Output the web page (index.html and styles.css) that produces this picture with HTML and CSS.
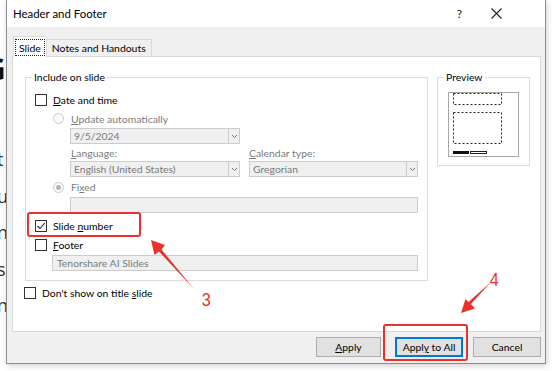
FILE: index.html
```html
<!DOCTYPE html>
<html lang="en">
  <head>
    <meta charset="UTF-8" />
    <meta name="viewport" content="width=device-width, initial-scale=1.0" />
    <title>Header and Footer</title>
    <link rel="stylesheet" href="styles.css">
  </head>
  <body>
    <!-- slide text peeking out behind the dialog -->
    <div class="slide-bg">
      <span class="bg-big">G</span>
      <span class="bg-letter l1">t</span>
      <span class="bg-letter l2">u</span>
      <span class="bg-letter l3">n</span>
      <span class="bg-letter l4">s</span>
      <span class="bg-letter l5">n</span>
    </div>

    <div class="dialog">
      <div class="titlebar">
        <span class="title">Header and Footer</span>
        <span class="help">?</span>
        <svg class="close" width="11" height="11" viewBox="0 0 11 11">
          <path d="M0.5 0.5 L10.5 10.5 M10.5 0.5 L0.5 10.5" stroke="#222" stroke-width="1.1" fill="none" />
        </svg>
      </div>

      <div class="dialog-body">
        <div class="tabs">
          <div class="tab active"><span class="focus">Slide</span></div>
          <div class="tab">Notes and Handouts</div>
        </div>

        <div class="panel">
          <div class="groups">
            <fieldset class="group include">
              <legend>Include on slide</legend>

              <div class="row row-date">
                <span class="check"></span>
                <span class="label"><u>D</u>ate and time</span>
              </div>
              <div class="row row-radio">
                <span class="radio"></span>
                <span class="label off"><u>U</u>pdate automatically</span>
              </div>
              <div class="combo combo-date">
                <span class="value">9/5/2024</span>
                <span class="drop"><svg width="5" height="3" viewBox="0 0 5 3"><path d="M0 0 L2.5 2.5 L5 0" stroke="#777" fill="none" /></svg></span>
              </div>
              <div class="pair-labels">
                <span class="label off lang-label"><u>L</u>anguage:</span>
                <span class="label off cal-label"><u>C</u>alendar type:</span>
              </div>
              <div class="pair-combos">
                <div class="combo combo-lang">
                  <span class="value">English (United States)</span>
                  <span class="drop"><svg width="5" height="3" viewBox="0 0 5 3"><path d="M0 0 L2.5 2.5 L5 0" stroke="#777" fill="none" /></svg></span>
                </div>
                <div class="combo combo-cal">
                  <span class="value">Gregorian</span>
                  <span class="drop"><svg width="5" height="3" viewBox="0 0 5 3"><path d="M0 0 L2.5 2.5 L5 0" stroke="#777" fill="none" /></svg></span>
                </div>
              </div>
              <div class="row row-fixed">
                <span class="radio picked"></span>
                <span class="label off">Fi<u>x</u>ed</span>
              </div>
              <div class="field field-fixed"></div>

              <div class="row row-number">
                <span class="check">
                  <svg width="10" height="10" viewBox="0 0 10 10"><path d="M1.5 5 L4 7.5 L8.8 2" stroke="#222" stroke-width="1.1" fill="none" /></svg>
                </span>
                <span class="label">Slide <u>n</u>umber</span>
              </div>
              <div class="row row-footer">
                <span class="check"></span>
                <span class="label"><u>F</u>ooter</span>
              </div>
              <div class="field field-footer">Tenorshare AI Slides</div>
            </fieldset>

            <fieldset class="group preview">
              <legend>Preview</legend>
              <svg class="preview-art" width="71" height="65" viewBox="0 0 71 65">
                <rect x="0.5" y="0.5" width="70" height="64" fill="#fff" stroke="#a6a6a6" />
                <rect x="5.5" y="1.5" width="48" height="11" fill="none" stroke="#222" stroke-dasharray="2 2" />
                <rect x="5.5" y="20.5" width="48" height="31" fill="none" stroke="#222" stroke-dasharray="2 2" />
                <rect x="5" y="59" width="16" height="3" fill="#111" />
                <rect x="22.5" y="59.5" width="16" height="2" fill="#fff" stroke="#222" />
              </svg>
            </fieldset>
          </div>

          <div class="row row-title">
            <span class="check"></span>
            <span class="label">Don't show on title <u>s</u>lide</span>
          </div>
        </div>

        <div class="buttons">
          <button class="btn btn-apply"><u>A</u>pply</button>
          <button class="btn btn-all">Appl<u>y</u> to All</button>
          <button class="btn btn-cancel">Cancel</button>
        </div>
      </div>
    </div>

    <!-- red annotations drawn over the screenshot -->
    <div class="mark mark-number"></div>
    <div class="mark mark-all"></div>
    <svg class="arrows" width="554" height="371" viewBox="0 0 554 371">
      <polygon points="151,240 165,245 161.5,249.5 194,289 159,251.5 154.5,255" fill="#e8322b" />
      <polygon points="461,313 465.5,299 468.5,302 491,282 471,304 475,308.5" fill="#e8322b" />
    </svg>
    <span class="step step-3">3</span>
    <span class="step step-4">4</span>
  </body>
</html>
```

FILE: styles.css
```css
* {
  box-sizing: border-box;
}
body {
  margin: 0;
  width: 554px;
  height: 371px;
  overflow: hidden;
  background-color: #fff;
  font-family: Lato, "Noto Sans", sans-serif;
  font-size: 10.4px;
  color: #000;
  position: relative;
}
.slide-bg {
  position: absolute;
  top: 0;
  left: 0;
  color: #333;
  font-family: "Open Sans", sans-serif;
}
.bg-big {
  position: absolute;
  left: -16px;
  top: 48px;
  font-size: 30px;
  font-weight: bold;
  color: #111;
}
.bg-letter {
  position: absolute;
  left: -3px;
  font-size: 18px;
}
.l1 { top: 147px; }
.l2 { top: 184px; }
.l3 { top: 220px; }
.l4 { top: 257px; }
.l5 { top: 293px; }

.dialog {
  position: relative;
  z-index: 1;
  margin-left: 6px;
  width: 540px;
  height: 364px;
  border: 1px solid #8c8c8c;
  border-top: none;
  background-color: #f0f0f0;
  box-shadow: 1px 2px 6px rgba(0, 0, 0, 0.18);
}
.titlebar {
  height: 27px;
  background-color: #fff;
  display: flex;
  align-items: center;
  padding-left: 6px;
}
.title {
  font-size: 11.4px;
  flex: 1;
}
.help {
  font-size: 12px;
  margin-right: 29px;
  color: #222;
}
.close {
  margin-right: 43px;
}
.dialog-body {
  padding: 9px 4px 0 5px;
}
.tabs {
  display: flex;
  align-items: flex-end;
  height: 20px;
  position: relative;
  z-index: 2;
}
.tab {
  height: 17px;
  border: 1px solid #d9d9d9;
  border-bottom: none;
  padding: 0 5px;
  display: flex;
  align-items: center;
}
.tab.active {
  height: 21px;
  margin-left: 1px;
  margin-bottom: -1px;
  background-color: #fff;
  padding: 2px 1px 1px;
  border-right: none;
}
.focus {
  border: 1px dotted #222;
  height: 17px;
  padding: 0 3px;
  display: flex;
  align-items: center;
}
.panel {
  height: 276px;
  background-color: #fff;
  border: 1px solid #d9d9d9;
  padding: 13px 10px 0 12px;
}
.groups {
  display: flex;
  align-items: flex-start;
  gap: 9px;
}
.group {
  margin: 0;
  border: 1px solid #dcdcdc;
  min-width: 0;
}
.group legend {
  line-height: 14px;
  padding: 0 2px;
  margin-left: -3px;
}
.include {
  width: 403px;
  padding: 6px 0 9px 9px;
}
.preview {
  width: 93px;
  padding: 8px 0 8px 10px;
}
.preview legend {
  margin-left: -4px;
}
.preview-art {
  display: block;
}
.row {
  display: flex;
  align-items: center;
  gap: 6px;
}
.row-date { height: 19px; }
.row-radio { height: 19px; padding-left: 18px; gap: 7px; }
.row-fixed { height: 20px; padding-left: 18px; gap: 7px; }
.row-number { height: 20px; margin-top: 3px; }
.row-footer { height: 18px; }
.row-title {
  height: 18px;
  margin-top: 3px;
  margin-left: -1px;
}
.check {
  width: 12px;
  height: 12px;
  border: 1px solid #333;
  background-color: #fff;
  display: flex;
  align-items: center;
  justify-content: center;
}
.radio {
  width: 11px;
  height: 11px;
  border: 1px solid #cbcbcb;
  border-radius: 50%;
  background-color: #fafafa;
  display: flex;
  align-items: center;
  justify-content: center;
}
.radio.picked::after {
  content: "";
  width: 5px;
  height: 5px;
  border-radius: 50%;
  background-color: #b5b5b5;
}
.label.off {
  color: #7a7a7a;
}
.combo,
.field {
  height: 16px;
  border: 1px solid #cccccc;
  background-color: #f0f0f0;
  color: #7a7a7a;
  display: flex;
  align-items: center;
}
.combo .value {
  flex: 1;
  padding-left: 3px;
}
.combo .drop {
  width: 11px;
  height: 100%;
  border-left: 1px solid #cccccc;
  display: flex;
  align-items: center;
  justify-content: center;
}
.combo-date {
  width: 170px;
  margin-left: 35px;
}
.pair-labels {
  height: 17px;
  display: flex;
  align-items: center;
  padding-left: 36px;
}
.lang-label {
  width: 178px;
}
.pair-combos {
  display: flex;
  gap: 9px;
  padding-left: 35px;
}
.combo-lang {
  width: 170px;
}
.combo-cal {
  width: 169px;
}
.field-fixed {
  width: 348px;
  margin-left: 35px;
}
.field-footer {
  width: 366px;
  margin-left: 17px;
  margin-top: 1px;
  padding-left: 4px;
}
.buttons {
  display: flex;
  justify-content: flex-end;
  padding-top: 5px;
}
.btn {
  height: 20px;
  font-family: inherit;
  font-size: 10.4px;
  color: #000;
  background-color: #e1e1e1;
  border: 1px solid #adadad;
  padding: 0;
}
.btn-apply {
  width: 65px;
}
.btn-all {
  width: 68px;
  margin-left: 14px;
  border: 2px solid #0078d7;
}
.btn-cancel {
  width: 68px;
  margin-left: 10px;
}
.mark {
  position: absolute;
  z-index: 3;
  border: 2px solid #e8322b;
  border-radius: 3px;
}
.mark-number {
  left: 27px;
  top: 212px;
  width: 114px;
  height: 25px;
}
.mark-all {
  left: 383px;
  top: 324px;
  width: 85px;
  height: 37px;
}
.arrows {
  position: absolute;
  top: 0;
  left: 0;
  z-index: 3;
}
.step {
  position: absolute;
  z-index: 3;
  color: #e8322b;
  font-family: "Liberation Sans", sans-serif;
  font-size: 19px;
  line-height: 19px;
  transform: scaleX(0.85);
}
.step-3 {
  left: 201px;
  top: 290px;
}
.step-4 {
  left: 489px;
  top: 270px;
}
```
